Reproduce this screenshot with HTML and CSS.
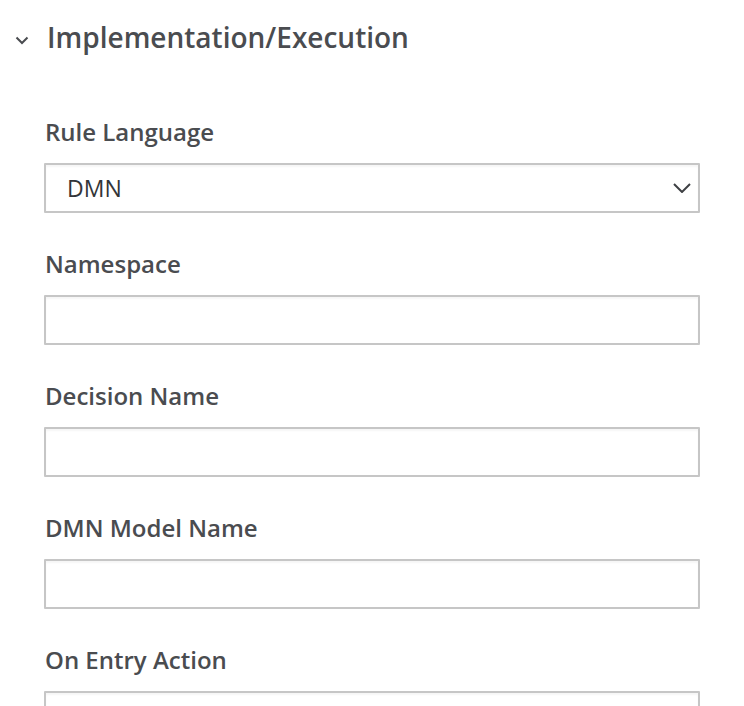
FILE: index.html
```html
<!DOCTYPE html>
<html>
<head>
<meta charset="utf-8">
<link rel="stylesheet" href="styles.css">
</head>
<body>
<div class="panel">
  <div class="header">
    <svg class="toggle" width="14" height="9" viewBox="0 0 14 9"><path d="M1.5 1.5 L7 7 L12.5 1.5" fill="none" stroke="#4a4c50" stroke-width="2"/></svg>
    <h2 class="title">Implementation/Execution</h2>
  </div>
  <div class="fields">
    <div class="field">
      <label class="label">Rule Language</label>
      <div class="select">
        <span class="value">DMN</span>
        <svg class="caret" width="18" height="10" viewBox="0 0 18 10"><path d="M1 1 L9 9 L17 1" fill="none" stroke="#3e4044" stroke-width="2"/></svg>
      </div>
    </div>
    <div class="field">
      <label class="label">Namespace</label>
      <div class="input"></div>
    </div>
    <div class="field">
      <label class="label">Decision Name</label>
      <div class="input"></div>
    </div>
    <div class="field">
      <label class="label">DMN Model Name</label>
      <div class="input"></div>
    </div>
    <div class="field">
      <label class="label">On Entry Action</label>
      <div class="input"></div>
    </div>
  </div>
</div>
</body>
</html>
```
FILE: styles.css
```css
html, body {
  margin: 0;
  padding: 0;
  background: #ffffff;
  overflow: hidden;
}
body {
  font-family: "Open Sans", "Liberation Sans", sans-serif;
  color: #4a4c50;
  width: 744px;
  height: 706px;
}
.panel {
  padding-top: 18px;
}
.header {
  display: flex;
  align-items: center;
  height: 38px;
}
.toggle {
  margin-left: 15px;
  margin-right: 18px;
  margin-top: 6px;
}
.title {
  margin: 0;
  font-size: 28px;
  line-height: 38px;
  font-weight: 600;
  color: #4a4c50;
}
.fields {
  margin-top: 59px;
  padding-left: 44px;
  width: 656px;
  display: flex;
  flex-direction: column;
  gap: 34px;
}
.field {
  display: flex;
  flex-direction: column;
}
.label {
  font-size: 24px;
  line-height: 30px;
  font-weight: 600;
  margin-top: 2px;
  margin-bottom: 16px;
  padding-left: 1px;
}
.select, .input {
  box-sizing: border-box;
  height: 50px;
  border: 2px solid #c6c6c6;
  border-radius: 1px;
  background: #fff;
  box-shadow: inset 0 2px 2px rgba(0,0,0,0.04);
}
.select {
  display: flex;
  align-items: center;
  justify-content: space-between;
  padding: 0 7px 0 21px;
}
.value {
  font-size: 23px;
  color: #333538;
}
.caret {
  display: block;
}
```
